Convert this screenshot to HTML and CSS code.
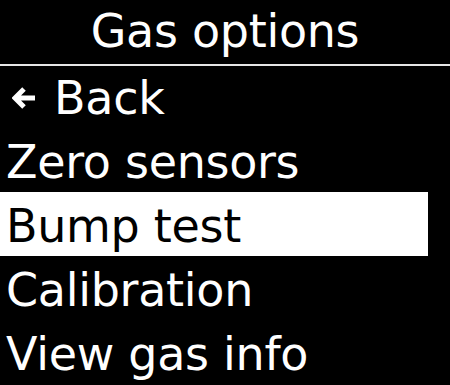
FILE: index.html
```html
<!DOCTYPE html>
<html lang="en">
<head>
    <meta charset="UTF-8">
    <meta name="viewport" content="width=device-width, initial-scale=1.0">
    <title>Gas options</title>
    <link rel="stylesheet" href="styles.css">
</head>
<body>
    <header class="title-bar">Gas options</header>

    <ul class="menu">
        <li class="menu-item back">
            <svg class="back-icon" width="24" height="24" viewBox="0 0 24 24">
                <path d="M12 3 L3 12 L12 21 M3 12 H23" fill="none" stroke="#fff" stroke-width="5" stroke-linecap="butt" stroke-linejoin="miter"/>
            </svg>
            Back
        </li>
        <li class="menu-item">Zero sensors</li>
        <li class="menu-item selected">Bump test</li>
        <li class="menu-item">Calibration</li>
        <li class="menu-item">View gas info</li>
    </ul>
</body>
</html>
```

FILE: styles.css
```css
* {
    margin: 0;
    padding: 0;
    box-sizing: border-box;
}

body {
    background: #000;
    color: #fff;
    font-family: 'DejaVu Sans', Verdana, sans-serif;
    font-size: 46px;
    width: 450px;
    height: 385px;
    overflow: hidden;
}

.title-bar {
    height: 66px;
    line-height: 63px;
    text-align: center;
    border-bottom: 2px solid #e6e6e6;
    letter-spacing: -0.3px;
}

.menu {
    list-style: none;
    width: 428px;
}

.menu-item {
    display: flex;
    align-items: center;
    height: 64px;
    line-height: 60px;
    padding: 4px 0 0 6px;
    letter-spacing: -0.3px;
    white-space: nowrap;
}

.menu-item.back {
    height: 62px;
    padding-top: 2px;
}

.menu-item.selected {
    background: #fff;
    color: #000;
}

.back-icon {
    width: 24px;
    height: 24px;
    margin: 0 18px 0 6px;
}
```
